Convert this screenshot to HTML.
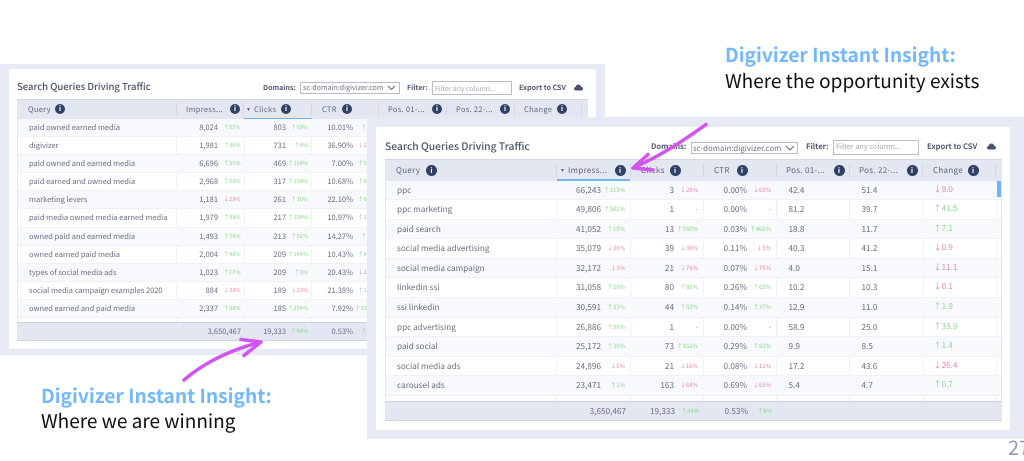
<!DOCTYPE html>
<html><head><meta charset="utf-8"><style>
html,body{margin:0;padding:0;background:#fff}
body{width:1024px;height:452px;overflow:hidden;position:relative;font-family:"Noto Sans CJK JP","Liberation Sans",sans-serif;text-rendering:geometricPrecision}
.a{position:absolute;white-space:nowrap}
.panel{position:absolute;background:#e6eaf5;overflow:hidden;filter:blur(.25px)}
.card{position:absolute;background:#fff}
.title{position:absolute;font-weight:500;color:#4a5468;line-height:14px;white-space:nowrap}
.lab{position:absolute;font-weight:700;color:#4f5a70;white-space:nowrap;line-height:12px}
.box{position:absolute;background:#fff;border:1px solid #b9bcc4;box-sizing:border-box;color:#7b8294;white-space:nowrap;overflow:hidden;line-height:11px}
.hd{position:absolute;background:#e3e7f2;border-top:1px solid #d3d8e4}
.hd span{position:absolute;color:#5d6679;white-space:nowrap;line-height:12px;letter-spacing:.3px}
.sep{position:absolute;width:1px;background:#d3d8e6}
.ic{position:absolute;border-radius:50%;background:#2f4066;color:#fff;font:700 8px/10px "Liberation Sans",sans-serif;text-align:center}
.ul{position:absolute;background:#71b3ee}
.body{position:absolute;overflow:hidden;background:#fff}
.r{position:relative;border-bottom:1px solid #eef1f7;box-sizing:border-box;color:#696f82}
.r:nth-child(even){background:#f7f9fd}
.r span{position:absolute;white-space:nowrap;top:0}
.g{color:#86d886!important}.p{color:#e5899d!important}
.vl{position:absolute;width:1px;background:#eef1f7;top:0;bottom:0}
.foot{position:absolute;background:#e3e7f2;border-top:1px solid #ced3e0;border-bottom:1px solid #ced3e0;box-sizing:border-box;color:#696f82}
.foot span{position:absolute;white-space:nowrap}

#L .r{height:18.1px;font-size:7.5px;line-height:17px}
#L .r span:nth-child(1){left:11px}
#L .r span:nth-child(2){right:370px}
#L .r span:nth-child(3){right:347.5px;font-size:5.6px}
#L .r span:nth-child(4){right:302px}
#L .r span:nth-child(5){right:280px;font-size:5.6px}
#L .r span:nth-child(6){right:235px}
#L .r span:nth-child(7){right:213px;font-size:5.6px}

#R .r{height:19.6px;font-size:8.2px;line-height:18.5px}
#R .r span:nth-child(1){left:11px}
#R .r span:nth-child(2){right:400px}
#R .r span:nth-child(3){right:376px;font-size:5.9px}
#R .r span:nth-child(4){right:327px}
#R .r span:nth-child(5){right:303px;font-size:5.9px}
#R .r span:nth-child(6){right:254px}
#R .r span:nth-child(7){right:230px;font-size:5.9px}
#R .r span:nth-child(8){left:402.5px}
#R .r span:nth-child(9){left:475.5px}
#R .r span:nth-child(10){left:547.5px;font-size:8.1px}
.head{position:absolute;font-weight:700;color:#72b8ff;font-size:19.2px;line-height:26px;white-space:nowrap;filter:blur(.25px)}
.sub{position:absolute;color:#111;font-size:19px;line-height:26px;white-space:nowrap;filter:blur(.25px)}
</style></head><body>

<div class="panel" style="left:0;top:64px;width:605px;height:291px">
<div class="card" style="left:9px;top:5px;width:587px;height:280px"></div>
<div class="title" style="left:17px;top:15px;font-size:9.5px">Search Queries Driving Traffic</div>
<div class="lab" style="left:263px;top:18px;font-size:7px">Domains:</div>
<div class="box" style="left:300px;top:18px;width:100px;height:12px;font-size:7.1px;padding-left:2px;line-height:10px;color:#6c7385">sc-domain:digivizer.com</div>
<svg class="a" style="left:387px;top:21px" width="9" height="6" viewBox="0 0 9 6"><path d="M1 1l3.500 3.500L8 1" fill="none" stroke="#5d6679"/></svg>
<div class="lab" style="left:407px;top:18px;font-size:7px">Filter:</div>
<div class="box" style="left:432px;top:17px;width:80px;height:14px;font-size:6.800px;padding-left:2px;line-height:12px;color:#a4a8b2">Filter any column...</div>
<div class="lab" style="left:519px;top:18px;font-size:7.100px">Export to CSV</div>
<svg class="a" style="left:574px;top:20px" width="9" height="7" viewBox="0 0 9 7"><path d="M2 6.500C.6 6.500 0 5.500 0 4.600 0 3.700.7 3 1.600 3 2 1.400 3.100.5 4.400.5c1.400 0 2.500 1 2.700 2.300C8.200 2.900 9 3.700 9 4.700 9 5.700 8.200 6.500 7.200 6.500z" fill="#47536b"/></svg>

<div class="hd" style="left:17px;top:35px;width:571px;height:20px;font-size:7.5px">
<span style="left:11px;top:4px">Query</span>
<span style="left:169px;top:4px">Impress...</span>
<span style="left:230px;top:3px;font-size:6px">▾</span>
<span style="left:237px;top:4px">Clicks</span>
<span style="left:305px;top:4px">CTR</span>
<span style="left:371px;top:4px">Pos. 01-...</span>
<span style="left:439px;top:4px">Pos. 22-...</span>
<span style="left:507px;top:4px">Change</span>
<div class="ic" style="left:38px;top:4px;width:10px;height:10px">i</div>
<div class="ic" style="left:213px;top:4px;width:10px;height:10px">i</div>
<div class="ic" style="left:264px;top:4px;width:10px;height:10px">i</div>
<div class="ic" style="left:325px;top:4px;width:10px;height:10px">i</div>
<div class="ic" style="left:415px;top:4px;width:10px;height:10px">i</div>
<div class="ic" style="left:483px;top:4px;width:10px;height:10px">i</div>
<div class="ic" style="left:540px;top:4px;width:10px;height:10px">i</div>
<div class="sep" style="left:159px;top:3px;height:12px"></div>
<div class="sep" style="left:226px;top:3px;height:12px"></div>
<div class="sep" style="left:294px;top:3px;height:12px"></div>
<div class="sep" style="left:361px;top:3px;height:12px"></div>
<div class="sep" style="left:429px;top:3px;height:12px"></div>
<div class="sep" style="left:497px;top:3px;height:12px"></div>
<div class="sep" style="left:564px;top:3px;height:12px"></div>
<div class="ul" style="left:227px;top:17.500px;width:68px;height:1.500px"></div>
</div>

<div class="body" id="L" style="left:17px;top:55px;width:571px;height:203px;border-left:1px solid #e3e7f2;box-sizing:border-box">
<div class="vl" style="left:158px"></div><div class="vl" style="left:226px"></div><div class="vl" style="left:293px"></div>
<div class="r"><span>paid owned earned media</span><span>8,024</span><span class="g">↑55%</span><span>803</span><span class="g">↑69%</span><span>10.01%</span><span class="g">↑9%</span></div>
<div class="r"><span>digivizer</span><span>1,981</span><span class="g">↑36%</span><span>731</span><span class="g">↑4%</span><span>36.90%</span><span class="p">↓27%</span></div>
<div class="r"><span>paid owned and earned media</span><span>6,696</span><span class="g">↑31%</span><span>469</span><span class="g">↑154%</span><span>7.00%</span><span class="g">↑56%</span></div>
<div class="r"><span>paid earned and owned media</span><span>2,968</span><span class="g">↑53%</span><span>317</span><span class="g">↑150%</span><span>10.68%</span><span class="g">↑60%</span></div>
<div class="r"><span>marketing levers</span><span>1,181</span><span class="p">↓23%</span><span>261</span><span class="g">↑30%</span><span>22.10%</span><span class="g">↑66%</span></div>
<div class="r"><span>paid media owned media earned media</span><span>1,979</span><span class="g">↑83%</span><span>217</span><span class="g">↑109%</span><span>10.97%</span><span class="g">↑14%</span></div>
<div class="r"><span>owned paid and earned media</span><span>1,493</span><span class="g">↑79%</span><span>213</span><span class="g">↑92%</span><span>14.27%</span><span class="g">↑5%</span></div>
<div class="r"><span>owned earned paid media</span><span>2,004</span><span class="g">↑98%</span><span>209</span><span class="g">↑194%</span><span>10.43%</span><span class="g">↑47%</span></div>
<div class="r"><span>types of social media ads</span><span>1,023</span><span class="g">↑17%</span><span>209</span><span class="g">↑3%</span><span>20.43%</span><span class="p">↓12%</span></div>
<div class="r"><span>social media campaign examples 2020</span><span>884</span><span class="p">↓33%</span><span>189</span><span class="p">↓23%</span><span>21.38%</span><span class="g">↑13%</span></div>
<div class="r"><span>owned earned and paid media</span><span>2,337</span><span class="g">↑68%</span><span>185</span><span class="g">↑294%</span><span>7.92%</span><span class="g">↑132%</span></div>
</div>
<div class="foot" style="left:17px;top:258px;width:571px;height:19px;font-size:7.5px;line-height:17px">
<span style="right:347px">3,650,467</span><span style="right:302px">19,333</span><span class="g" style="right:280px;font-size:5.6px">↑44%</span><span style="right:235px">0.53%</span><span class="g" style="right:213px;font-size:5.6px">↑6%</span>
</div>
</div>

<div class="panel" style="left:367px;top:117px;width:657px;height:322px">
<div class="card" style="left:9px;top:10px;width:634px;height:303px"></div>
<div class="title" style="left:18px;top:22px;font-size:10.3px">Search Queries Driving Traffic</div>
<div class="lab" style="left:284px;top:24px;font-size:7.600px">Domains:</div>
<div class="box" style="left:324px;top:24.500px;width:107px;height:12.500px;font-size:7.800px;padding-left:1px;color:#6c7385">sc-domain:digivizer.com</div>
<svg class="a" style="left:418px;top:28px" width="10" height="6" viewBox="0 0 10 6"><path d="M1 1l4 4 4-4" fill="none" stroke="#5d6679"/></svg>
<div class="lab" style="left:439px;top:24px;font-size:7.600px">Filter:</div>
<div class="box" style="left:466px;top:23px;width:86px;height:15px;font-size:7.300px;padding-left:2px;line-height:13px;color:#a4a8b2">Filter any column...</div>
<div class="lab" style="left:560px;top:24px;font-size:7.600px">Export to CSV</div>
<svg class="a" style="left:620px;top:26px" width="9" height="7" viewBox="0 0 9 7"><path d="M2 6.500C.6 6.500 0 5.500 0 4.600 0 3.700.7 3 1.600 3 2 1.400 3.100.5 4.400.5c1.400 0 2.500 1 2.700 2.300C8.200 2.900 9 3.700 9 4.700 9 5.700 8.200 6.500 7.200 6.500z" fill="#47536b"/></svg>

<div class="hd" style="left:18px;top:42px;width:617px;height:21.500px;font-size:8px">
<span style="left:11px;top:5px">Query</span>
<span style="left:176px;top:4px;font-size:6px">▾</span>
<span style="left:183px;top:5px">Impress...</span>
<span style="left:256px;top:5px">Clicks</span>
<span style="left:329px;top:5px">CTR</span>
<span style="left:401px;top:5px">Pos. 01-...</span>
<span style="left:474px;top:5px">Pos. 22-...</span>
<span style="left:548px;top:5px">Change</span>
<div class="ic" style="left:41px;top:5px;width:11px;height:11px;line-height:11px">i</div>
<div class="ic" style="left:229.500px;top:5px;width:11px;height:11px;line-height:11px">i</div>
<div class="ic" style="left:284.500px;top:5px;width:11px;height:11px;line-height:11px">i</div>
<div class="ic" style="left:351.500px;top:5px;width:11px;height:11px;line-height:11px">i</div>
<div class="ic" style="left:448.500px;top:5px;width:11px;height:11px;line-height:11px">i</div>
<div class="ic" style="left:521.500px;top:5px;width:11px;height:11px;line-height:11px">i</div>
<div class="ic" style="left:582.500px;top:5px;width:11px;height:11px;line-height:11px">i</div>
<div class="sep" style="left:171px;top:3px;height:14px"></div>
<div class="sep" style="left:245px;top:3px;height:14px"></div>
<div class="sep" style="left:318px;top:3px;height:14px"></div>
<div class="sep" style="left:391px;top:3px;height:14px"></div>
<div class="sep" style="left:464px;top:3px;height:14px"></div>
<div class="sep" style="left:537px;top:3px;height:14px"></div>
<div class="sep" style="left:610px;top:3px;height:14px"></div>
<div class="ul" style="left:172px;top:18.500px;width:73px;height:2px"></div>
</div>

<div class="body" id="R" style="left:18px;top:63.500px;width:617px;height:220.500px;border-left:1px solid #e3e7f2;border-right:1px solid #e3e7f2;box-sizing:border-box">
<div class="vl" style="left:170px"></div><div class="vl" style="left:244px"></div><div class="vl" style="left:317px"></div><div class="vl" style="left:390px"></div><div class="vl" style="left:463px"></div><div class="vl" style="left:537px"></div><div class="vl" style="left:610px"></div>
<div class="r"><span>ppc</span><span>66,243</span><span class="g">↑113%</span><span>3</span><span class="p">↓25%</span><span>0.00%</span><span class="p">↓65%</span><span>42.4</span><span>51.4</span><span class="p">↓9.0</span></div>
<div class="r"><span>ppc marketing</span><span>49,806</span><span class="g">↑502%</span><span>1</span><span>-</span><span>0.00%</span><span>-</span><span>81.2</span><span>39.7</span><span class="g">↑41.5</span></div>
<div class="r"><span>paid search</span><span>41,052</span><span class="g">↑15%</span><span>13</span><span class="g">↑550%</span><span>0.03%</span><span class="g">↑466%</span><span>18.8</span><span>11.7</span><span class="g">↑7.1</span></div>
<div class="r"><span>social media advertising</span><span>35,079</span><span class="p">↓36%</span><span>39</span><span class="p">↓39%</span><span>0.11%</span><span class="p">↓5%</span><span>40.3</span><span>41.2</span><span class="p">↓0.9</span></div>
<div class="r"><span>social media campaign</span><span>32,172</span><span class="p">↓3%</span><span>21</span><span class="p">↓76%</span><span>0.07%</span><span class="p">↓75%</span><span>4.0</span><span>15.1</span><span class="p">↓11.1</span></div>
<div class="r"><span>linkedin ssi</span><span>31,058</span><span class="g">↑18%</span><span>80</span><span class="g">↑95%</span><span>0.26%</span><span class="g">↑65%</span><span>10.2</span><span>10.3</span><span class="p">↓0.1</span></div>
<div class="r"><span>ssi linkedin</span><span>30,591</span><span class="g">↑33%</span><span>44</span><span class="g">↑83%</span><span>0.14%</span><span class="g">↑37%</span><span>12.9</span><span>11.0</span><span class="g">↑1.9</span></div>
<div class="r"><span>ppc advertising</span><span>26,886</span><span class="g">↑99%</span><span>1</span><span>-</span><span>0.00%</span><span>-</span><span>58.9</span><span>25.0</span><span class="g">↑33.9</span></div>
<div class="r"><span>paid social</span><span>25,172</span><span class="g">↑39%</span><span>73</span><span class="g">↑152%</span><span>0.29%</span><span class="g">↑82%</span><span>9.9</span><span>8.5</span><span class="g">↑1.4</span></div>
<div class="r"><span>social media ads</span><span>24,896</span><span class="p">↓5%</span><span>21</span><span class="p">↓16%</span><span>0.08%</span><span class="p">↓11%</span><span>17.2</span><span>43.6</span><span class="p">↓26.4</span></div>
<div class="r"><span>carousel ads</span><span>23,471</span><span class="g">↑1%</span><span>163</span><span class="p">↓64%</span><span>0.69%</span><span class="p">↓65%</span><span>5.4</span><span>4.7</span><span class="g">↑0.7</span></div>
<div class="a" style="left:611px;top:0;width:5px;height:16.500px;background:#6fb5f5"></div>
</div>
<div class="foot" style="left:18px;top:284px;width:617px;height:20px;font-size:8.2px;line-height:18px">
<span style="right:376px">3,650,467</span><span style="right:327px">19,333</span><span class="g" style="right:303px;font-size:5.9px">↑44%</span><span style="right:254px">0.53%</span><span class="g" style="right:230px;font-size:5.9px">↑6%</span>
</div>
</div>

<svg class="a" style="left:0;top:0;filter:blur(.3px)" width="1024" height="452" viewBox="0 0 1024 452">
<path d="M184 380C205 362 230 350 261 342M241 339.500L261 342L244 355.500" fill="none" stroke="#d353f2" stroke-width="3.500" stroke-linecap="round" stroke-linejoin="round"/>
<path d="M706 124.500C680 143 660 156 633 168M648 154.500L633 168L653 170" fill="none" stroke="#d353f2" stroke-width="3.500" stroke-linecap="round" stroke-linejoin="round"/>
</svg>

<div class="head" style="left:41px;top:381.5px">Digivizer Instant Insight:</div>
<div class="sub" style="left:41px;top:408px">Where we are winning</div>
<div class="head" style="left:725px;top:41px">Digivizer Instant Insight:</div>
<div class="sub" style="left:725px;top:68px">Where the opportunity exists</div>
<div class="a" style="left:1008px;top:436px;font-size:20px;line-height:22px;color:#8f9cb8">27</div>
</body></html>
